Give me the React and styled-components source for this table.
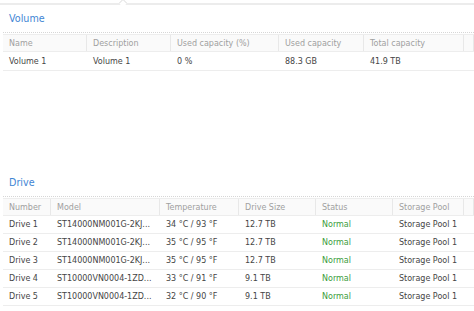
import React from "react";
import styled, { createGlobalStyle } from "styled-components";

const GlobalStyle = createGlobalStyle`
  html, body {
    margin: 0;
    padding: 0;
    background: #fff;
  }
  body {
    font-family: "DejaVu Sans", Verdana, sans-serif;
    width: 474px;
    height: 311px;
    overflow: hidden;
  }
`;

const Page = styled.div`
  width: 474px;
  height: 311px;
  overflow: hidden;
`;

const TopBar = styled.div`
  position: relative;
  height: 3px;
  border-bottom: 2px solid #ececec;

  &::after {
    content: "";
    position: absolute;
    left: 120px;
    top: 0px;
    width: 5px;
    height: 5px;
    background: #fff;
    border-left: 1px solid #e4e4e4;
    border-top: 1px solid #e4e4e4;
    transform: rotate(45deg);
  }
`;

const Section = styled.section`
  height: ${(p) => p.$height || "auto"};
  padding: 0 0 0 3px;
`;

const Title = styled.div`
  height: 27px;
  line-height: 28px;
  padding-left: 6px;
  font-size: 9.6px;
  color: #3f86d4;
  border-bottom: 1px dotted #d6d6d6;
`;

const Table = styled.div`
  margin-top: 1px;
`;

const Row = styled.div`
  display: grid;
  grid-template-columns: ${(p) => p.$cols};
  height: ${(p) => p.$h || "18px"};
  align-items: stretch;
  border-bottom: 1px solid #ededed;
  box-sizing: border-box;
`;

const HeadRow = styled(Row)`
  border-top: 1px solid #ededed;
  background: #fafafa;
`;

const HeadCell = styled.div`
  display: flex;
  align-items: center;
  padding-left: 6px;
  font-size: 8px;
  color: #a0a0a0;
  border-right: 1px solid #e8e8e8;
  white-space: nowrap;
  overflow: hidden;
`;

const Cell = styled.div`
  display: flex;
  align-items: center;
  padding-left: 6px;
  font-size: 8px;
  color: ${(p) => (p.$ok ? "#3b9d3b" : "#454545")};
  white-space: nowrap;
  overflow: hidden;
`;

const volumeCols = "84px 84px 108px 85px 100px 1fr";
const driveCols = "48px 109px 79px 77px 77px 71px 1fr";

const volumeHead = ["Name", "Description", "Used capacity (%)", "Used capacity", "Total capacity", ""];
const volumes = [["Volume 1", "Volume 1", "0 %", "88.3 GB", "41.9 TB", ""]];

const driveHead = ["Number", "Model", "Temperature", "Drive Size", "Status", "Storage Pool", ""];
const drives = [
  ["Drive 1", "ST14000NM001G-2KJ...", "34 °C / 93 °F", "12.7 TB"],
  ["Drive 2", "ST14000NM001G-2KJ...", "35 °C / 95 °F", "12.7 TB"],
  ["Drive 3", "ST14000NM001G-2KJ...", "35 °C / 95 °F", "12.7 TB"],
  ["Drive 4", "ST10000VN0004-1ZD...", "33 °C / 91 °F", "9.1 TB"],
  ["Drive 5", "ST10000VN0004-1ZD...", "32 °C / 90 °F", "9.1 TB"],
];

export default function App() {
  return (
    <Page>
      <GlobalStyle />
      <TopBar />
      <Section $height="164px">
        <Title>Volume</Title>
        <Table>
          <HeadRow $cols={volumeCols}>
            {volumeHead.map((h, i) => (
              <HeadCell key={i}>{h}</HeadCell>
            ))}
          </HeadRow>
          {volumes.map((r, i) => (
            <Row key={i} $cols={volumeCols} $h="19px">
              {r.map((c, j) => (
                <Cell key={j}>{c}</Cell>
              ))}
            </Row>
          ))}
        </Table>
      </Section>
      <Section>
        <Title>Drive</Title>
        <Table>
          <HeadRow $cols={driveCols}>
            {driveHead.map((h, i) => (
              <HeadCell key={i}>{h}</HeadCell>
            ))}
          </HeadRow>
          {drives.map((d) => (
            <Row key={d[0]} $cols={driveCols}>
              <Cell>{d[0]}</Cell>
              <Cell>{d[1]}</Cell>
              <Cell>{d[2]}</Cell>
              <Cell>{d[3]}</Cell>
              <Cell $ok>Normal</Cell>
              <Cell>Storage Pool 1</Cell>
              <Cell />
            </Row>
          ))}
        </Table>
      </Section>
    </Page>
  );
}
